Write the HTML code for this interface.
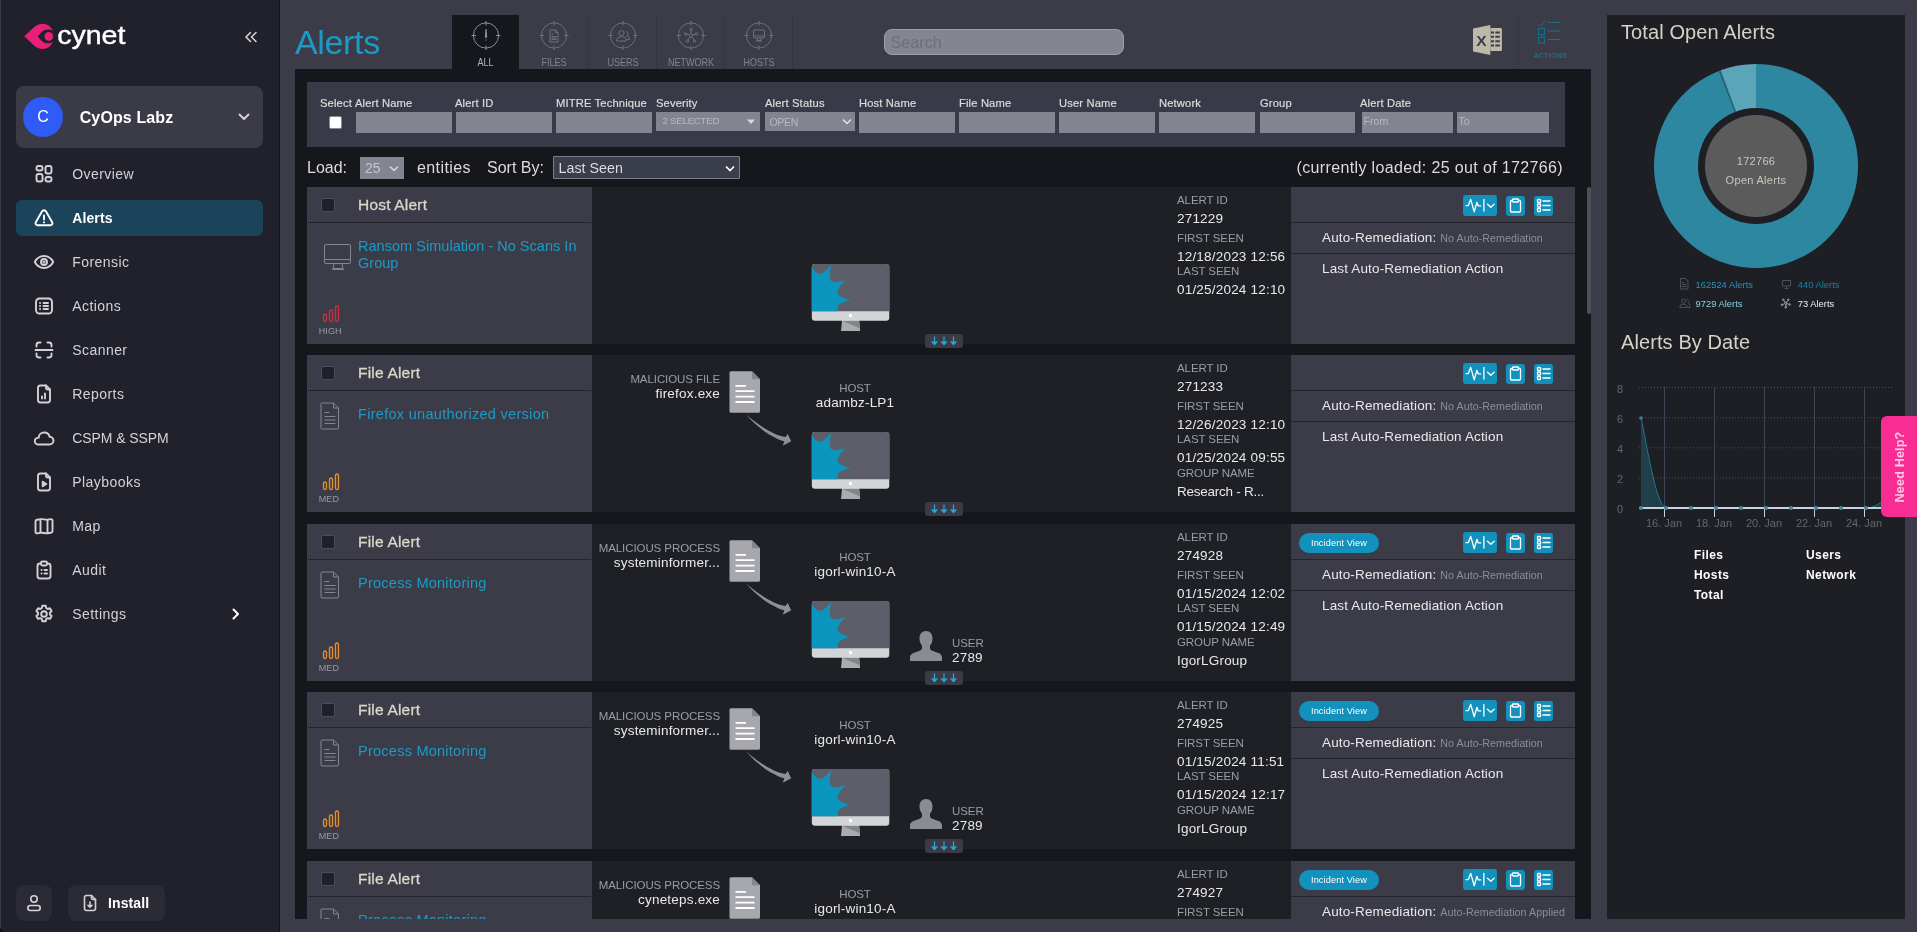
<!DOCTYPE html>
<html lang="en"><head><meta charset="utf-8"><title>Cynet - Alerts</title>
<style>
*{box-sizing:border-box;margin:0;padding:0}
html,body{width:1917px;height:932px;overflow:hidden;background:#3c3c48;font-family:"Liberation Sans",sans-serif;color:#e6e6e6}
.abs{position:absolute}
#app{position:absolute;left:0;top:0;width:1917px;height:932px;overflow:hidden;will-change:transform}
#side{position:absolute;left:0;top:0;width:280px;height:932px;background:#21212c;box-shadow:inset 1px 0 0 #3c3c48,inset -1px 0 0 #15151b;font-family:"Liberation Sans",sans-serif}
#ws{position:absolute;left:16px;top:86px;width:247px;height:62px;background:#3b3b47;border-radius:8px}
#ws .av{position:absolute;left:7px;top:11px;width:40px;height:40px;border-radius:50%;background:#2f5bf7;color:#fff;font-size:16px;text-align:center;line-height:40px}
#ws .nm{position:absolute;left:63.7px;top:22px;font-size:16px;font-weight:bold;color:#fff;line-height:20px;letter-spacing:.12px}
.nav{position:absolute;left:16px;width:247px;height:36px;border-radius:6px;color:#d2d2d6;font-size:14px;line-height:36px;letter-spacing:.45px}
.nav span{position:absolute;left:56.2px;top:0}
.nav svg{position:absolute;left:17px;top:7px;width:22px;height:22px;fill:none;stroke:#d2d2d6;stroke-width:1.9;stroke-linecap:round;stroke-linejoin:round}
.nav.on{background:#1b445a;color:#fff;font-weight:bold;letter-spacing:.12px}
.nav.on svg{stroke:#fff}
.sbtn{position:absolute;top:885px;height:36px;background:#2b2b36;border-radius:8px}
#main{position:absolute;left:295px;top:69px;width:1296px;height:850px;background:#16171c;overflow:hidden}
#title{position:absolute;left:295px;top:20px;font-size:34px;color:#1a9bc7;line-height:44px;letter-spacing:-.35px}
.tab{position:absolute;top:15px;width:68px;height:54px}
.tsep{position:absolute;top:15px;width:1px;height:54px;background:#343741}
.tab.on{background:#16171c;width:67px}
.tab svg{position:absolute;left:19.4px;top:5px;width:30px;height:32px;fill:none;stroke:#6c707a;stroke-width:1}
.tab b{position:absolute;left:0;width:100%;top:42px;text-align:center;font-weight:normal;font-size:10.4px;line-height:12px;color:#80838c;letter-spacing:0;transform:scaleX(.87)}
.tab.on b{color:#b4b4b6}
.tab.on svg{stroke:#8a8e98}
#search{position:absolute;left:884px;top:29px;width:240px;height:26px;border-radius:8px;background:#838690;border:1px solid #9c9fa8;color:#6d7078;font-size:16.2px;line-height:25px;padding-left:5.5px}
#fbar{position:absolute;left:12px;top:13px;width:1258px;height:65px;background:#383b47}
.fl{position:absolute;top:14px;font-size:11.2px;line-height:14px;color:#dcdcdc;white-space:nowrap;letter-spacing:.15px;-webkit-text-stroke:.2px #dcdcdc}
.fi{position:absolute;top:30px;height:21px;background:#828590}
.fi i{position:absolute;left:3px;top:2px;font-style:normal;font-size:10.5px;line-height:14px;color:#b7b9c0;letter-spacing:.1px}
#lbar{position:absolute;left:12px;top:87px;font-size:16px;line-height:24px;color:#dcdcdc;white-space:nowrap}
.card{position:absolute;left:12px;width:1268px;height:157px}
.cl{position:absolute;left:0;top:0;width:285px;height:157px;background:#3c3c48}
.cm{position:absolute;left:285px;top:0;width:699px;height:157px;background:#1e2026}
.cr{position:absolute;left:984px;top:0;width:284px;height:157px;background:#3c3c48}
.cb{position:absolute;left:14px;top:11px;width:14px;height:14px;border:1px solid #4a505b;border-radius:2px;background:#1d2128}
.ct{position:absolute;left:51px;top:7px;font-size:15.5px;line-height:22px;color:#dbd8ca;white-space:nowrap;-webkit-text-stroke:.3px #dbd8ca;letter-spacing:.2px}
.hr{position:absolute;left:1px;right:1px;height:1px;background:#24252c}
.lnk{position:absolute;left:51px;top:51px;width:232px;font-size:14.5px;line-height:17px;color:#1a9bc7;letter-spacing:.1px}
.sev{position:absolute;left:11.7px;top:137.5px;font-size:9px;line-height:12px;color:#9a9ca4;letter-spacing:.1px}
.lab{font-size:11.5px;line-height:15px;color:#9b9da3;white-space:nowrap;letter-spacing:-.08px}
.val{font-size:13.5px;line-height:17px;color:#e9e9e9;white-space:nowrap;letter-spacing:.2px}
.meta{position:absolute;left:585px;top:6px}
.ar{position:absolute;left:31px;font-size:13.5px;line-height:18px;color:#e9e9e9;white-space:nowrap;letter-spacing:.15px}
.ar small{font-size:10.7px;color:#8c8e96;letter-spacing:.05px}
.ib{position:absolute;top:9px;height:19.5px;background:#1391bd;border-radius:3px}
.ib svg{position:absolute;left:0;top:0;fill:none;stroke:#fff;stroke-width:1.3;stroke-linecap:round;stroke-linejoin:round}
.inc{position:absolute;left:8px;top:8.5px;width:80px;height:20px;border-radius:10px;background:#1391bd;color:#fff;font-size:9.2px;line-height:20px;text-align:center;letter-spacing:.12px}
.more{position:absolute;left:617px;top:334px;width:40px;height:14px;background:#3a3b47;border-radius:2px}
#right{position:absolute;left:1607px;top:15px;width:298px;height:904px;background:#1d1f25;overflow:hidden}
.rt{position:absolute;left:14px;font-size:20px;line-height:26px;color:#d5d2c6;white-space:nowrap;letter-spacing:.1px}
.lg{position:absolute;font-size:9.3px;line-height:12px;white-space:nowrap;letter-spacing:.05px}
.cx{position:absolute;font-size:11px;line-height:14px;color:#64676e;white-space:nowrap}
.cl2{position:absolute;font-size:12px;font-weight:bold;line-height:16px;color:#fff;white-space:nowrap;letter-spacing:.42px}
#help{position:absolute;left:1881px;top:416px;width:36px;height:101px;background:#f72d93;border-radius:6px 0 0 6px}
#help span{position:absolute;left:-30.600px;top:43px;width:100px;text-align:center;transform:rotate(-90deg);font-size:12.700px;font-weight:bold;color:#ffc9e3;line-height:16px;letter-spacing:.1px}
</style></head><body><div id="app">
<div id="side">
<svg class="abs" style="left:22px;top:20px" width="110" height="34" viewBox="0 0 110 34"><path d="M2.300 16.300 L12 7.200 C15.500 3.900 20.500 2.900 24.500 4.500 C27.500 5.700 29.800 8 30.800 10.800 C29.500 10 28 9.500 26.500 9.500 C23 9.500 20.500 11 18.800 12.900 L15.800 16.400 L18.800 19.900 C20.500 21.800 23 23.300 26.500 23.300 C28 23.300 29.500 22.800 30.800 21.900 C29.800 24.700 27.500 27 24.500 28.200 C20.500 29.800 15.500 28.800 12 25.500 Z" fill="#e91e79"/><circle cx="26.800" cy="16.400" r="4.300" fill="#e91e79"/><text x="35.200" y="23.800" font-family="Liberation Sans, sans-serif" font-size="25.500" fill="#fff" textLength="68.2" lengthAdjust="spacingAndGlyphs" stroke="#fff" stroke-width=".4">cynet</text></svg>
<svg class="abs" style="left:242px;top:29px" width="16" height="16" viewBox="0 0 16 16" fill="none" stroke="#d8d8dc" stroke-width="1.500" stroke-linecap="round" stroke-linejoin="round"><path d="M8.500 3.500 L4 8 L8.500 12.500 M14 3.500 L9.500 8 L14 12.500"/></svg>
<div id="ws"><div class="av">C</div><div class="nm">CyOps Labz</div><svg class="abs" style="left:220px;top:24px" width="16" height="14" viewBox="0 0 16 14" fill="none" stroke="#d0d0d4" stroke-width="2" stroke-linecap="round" stroke-linejoin="round"><path d="M3.500 4.500 L8 9 L12.500 4.500"/></svg></div>
<div class="nav" style="top:156px"><svg viewBox="0 0 22 22"><rect x="3.5" y="3" width="6" height="4.5" rx="2"/><rect x="12.5" y="3" width="6" height="7.5" rx="2"/><rect x="3.5" y="11" width="6" height="7.5" rx="2"/><rect x="12.5" y="14" width="6" height="4.5" rx="2"/></svg><span>Overview</span></div>
<div class="nav on" style="top:200px"><svg viewBox="0 0 22 22"><path d="M11 3.2c.8 0 1.5.4 1.9 1.1l6.3 10.9c.8 1.4-.2 3.1-1.9 3.1H4.700c-1.700 0-2.700-1.700-1.900-3.100L9.100 4.300c.4-.7 1.100-1.100 1.900-1.100z"/><path d="M11 8.500v4"/><path d="M11 15.300v.1"/></svg><span>Alerts</span></div>
<div class="nav" style="top:244px"><svg viewBox="0 0 22 22"><path d="M1.800 11C3.800 7.200 7.100 5 11 5s7.200 2.200 9.200 6c-2 3.800-5.300 6-9.200 6S3.800 14.800 1.800 11z"/><circle cx="11" cy="11" r="3"/><circle cx="11" cy="11" r=".6"/></svg><span>Forensic</span></div>
<div class="nav" style="top:288px"><svg viewBox="0 0 22 22"><rect x="3" y="3.500" width="16" height="15" rx="3.500"/><path d="M7 8h.1M7 11h.1M7 14h.1M10.500 8h4.500M10.500 11h4.500M10.500 14h4.500"/></svg><span>Actions</span></div>
<div class="nav" style="top:332px"><svg viewBox="0 0 22 22"><path d="M3.500 7.500V6c0-1.400 1.100-2.500 2.500-2.500h1.500M14.500 3.500H16c1.400 0 2.500 1.100 2.500 2.500v1.500M18.500 14.500V16c0 1.400-1.100 2.500-2.500 2.500h-1.500M7.500 18.500H6c-1.400 0-2.500-1.100-2.500-2.500v-1.500M2.500 11h17"/></svg><span>Scanner</span></div>
<div class="nav" style="top:376px"><svg viewBox="0 0 22 22"><path d="M13 2.500H7.500C6.100 2.500 5 3.600 5 5v12c0 1.400 1.100 2.500 2.500 2.500h7c1.400 0 2.500-1.100 2.500-2.500V6.500l-4-4z"/><path d="M13 2.500V5c0 .800.700 1.500 1.500 1.500H17"/><path d="M9 15.500v-2M12 15.500v-5"/></svg><span>Reports</span></div>
<div class="nav" style="top:420px"><svg viewBox="0 0 22 22"><path d="M6.500 17.500h9.800c2.300 0 4.200-1.700 4.200-3.900 0-2.100-1.700-3.800-3.900-3.900C16 7.300 13.800 5.500 11.200 5.500c-3 0-5.400 2.300-5.500 5.100-2.200.200-3.900 1.700-3.900 3.600 0 1.900 1.700 3.300 3.700 3.300z"/></svg><span style="letter-spacing:-.07px">CSPM &amp; SSPM</span></div>
<div class="nav" style="top:464px"><svg viewBox="0 0 22 22"><path d="M13 2.500H7.500C6.100 2.500 5 3.600 5 5v12c0 1.400 1.100 2.500 2.500 2.500h7c1.400 0 2.500-1.100 2.500-2.500V6.500l-4-4z"/><path d="M13 2.500V5c0 .800.700 1.500 1.500 1.500H17"/><path d="M9.700 10.800l3.600 2.200-3.600 2.200z" fill="#d2d2d6"/></svg><span>Playbooks</span></div>
<div class="nav" style="top:508px"><svg viewBox="0 0 22 22"><path d="M2.500 6.500c0-.9.600-1.600 1.500-1.700l3.500-.6v13.600l-3.300.6c-.9.100-1.700-.5-1.700-1.400V6.500zM7.500 4.200c2.300-.5 4.700.9 7 .5v13.600c-2.300.4-4.700-1-7-.5zM14.500 4.700l3.300-.6c.9-.1 1.700.5 1.700 1.400v10.500c0 .9-.6 1.600-1.500 1.700l-3.500.6"/></svg><span>Map</span></div>
<div class="nav" style="top:552px"><svg viewBox="0 0 22 22"><path d="M8 4.500H7C5.600 4.500 4.500 5.600 4.500 7v10c0 1.400 1.100 2.500 2.500 2.500h8c1.400 0 2.500-1.100 2.500-2.500V7c0-1.400-1.100-2.500-2.500-2.500h-1"/><rect x="8" y="2.500" width="6" height="4" rx="1.500"/><path d="M8.500 11h.1M8.500 14.500h.1M11.500 11h2.500M11.500 14.500h2.500"/></svg><span>Audit</span></div>
<div class="nav" style="top:596px"><svg viewBox="0 0 22 22"><circle cx="11" cy="11" r="2.800"/><path d="M9.300 2.800h3.400l.5 2.300 1.500.9 2.200-.8 1.700 2.900-1.700 1.600v1.700l1.700 1.600-1.700 2.900-2.200-.8-1.500.9-.5 2.300H9.300l-.5-2.300-1.500-.9-2.200.8-1.700-2.900 1.700-1.600V9.700L3.400 8.100l1.700-2.900 2.200.8 1.500-.9z"/></svg><span>Settings</span><svg style="left:212px;top:10px;width:16px;height:16px;stroke:#fff;stroke-width:2" viewBox="0 0 16 16"><path d="M5.500 3.500 L10 8 L5.500 12.500"/></svg></div>
<div class="sbtn" style="left:16px;width:36px"><svg class="abs" style="left:8px;top:8px" width="20" height="20" viewBox="0 0 20 20" fill="none" stroke="#d2d2d6" stroke-width="1.600"><circle cx="10" cy="6" r="3.200"/><rect x="3.800" y="12.500" width="12.400" height="5" rx="2.500"/></svg></div>
<div class="sbtn" style="left:68px;width:97px"><svg class="abs" style="left:12px;top:8px" width="20" height="20" viewBox="0 0 20 20" fill="none" stroke="#d2d2d6" stroke-width="1.600" stroke-linecap="round" stroke-linejoin="round"><path d="M11.500 2.500H6.500C5.400 2.500 4.500 3.400 4.500 4.500v11c0 1.100.9 2 2 2h7c1.100 0 2-.9 2-2V6.500l-4-4z"/><path d="M11.500 2.500V5c0 .800.700 1.500 1.500 1.500h2.500"/><path d="M10 9v5M8 12.200l2 2 2-2"/></svg><span class="abs" style="left:40px;top:9px;font-size:14px;font-weight:bold;color:#fff;line-height:18px;letter-spacing:.1px">Install</span></div>
<svg class="abs" style="left:0;top:926px" width="6" height="6" viewBox="0 0 6 6"><path d="M0 0 C0 3.500 2.500 6 6 6 L0 6 Z" fill="#0a0a08"/></svg>
</div>
<div id="title">Alerts</div>
<div class="tab on" style="left:452px"><svg viewBox="0 0 30 32"><circle cx="15" cy="15.500" r="12.600"/><path d="M15 1v4.500M15 25.500v4.500M.5 15.500h4.500M25 15.500h4.500"/><path d="M15 9l-.5 8h1z M15 19.500v1" stroke-width="1.300"/></svg><b>ALL</b></div>
<div class="tab" style="left:520px"><svg viewBox="0 0 30 32"><circle cx="15" cy="15.500" r="12.600"/><path d="M15 1v4.500M15 25.500v4.500M.5 15.500h4.500M25 15.500h4.500"/><path d="M11 10h5.500l2.500 2.500v9.500h-8z M16.500 10v2.500h2.500" stroke-width="1"/><path d="M12.500 14h2M12.500 16.500h5M12.500 18h5M12.500 19.500h5" stroke-width="1.200"/></svg><b>FILES</b></div>
<div class="tsep" style="left:587px"></div>
<div class="tab" style="left:588.5px"><svg viewBox="0 0 30 32"><circle cx="15" cy="15.500" r="12.600"/><path d="M15 1v4.500M15 25.500v4.500M.5 15.500h4.500M25 15.500h4.500"/><circle cx="13.500" cy="13" r="2.600"/><path d="M8.500 21c0-3 2-4.300 5-4.300s5 1.300 5 4.300z"/><path d="M17.500 11.500c1.800 0 2.500 1.200 2.500 2.400 0 1-.5 1.800-1.200 2.200 1.800.4 2.900 1.500 2.900 3.400h-2.500"/></svg><b>USERS</b></div>
<div class="tsep" style="left:656px"></div>
<div class="tab" style="left:656.5px"><svg viewBox="0 0 30 32"><circle cx="15" cy="15.500" r="12.600"/><path d="M15 1v4.500M15 25.500v4.500M.5 15.500h4.500M25 15.500h4.500"/><circle cx="15" cy="15.500" r="1.600"/><circle cx="15" cy="9.500" r="1.200"/><circle cx="9.500" cy="14" r="1.200"/><circle cx="20.500" cy="14" r="1.200"/><circle cx="11.500" cy="21" r="1.200"/><circle cx="18.500" cy="21" r="1.200"/><path d="M15 10.700v3.200M10.700 14.300l2.800.8M19.300 14.300l-2.800.8M12.200 20l1.900-3.100M17.800 20l-1.900-3.100"/></svg><b>NETWORK</b></div>
<div class="tsep" style="left:724px"></div>
<div class="tab" style="left:724.5px"><svg viewBox="0 0 30 32"><circle cx="15" cy="15.500" r="12.600"/><path d="M15 1v4.500M15 25.500v4.500M.5 15.500h4.500M25 15.500h4.500"/><rect x="9.500" y="10" width="11" height="8" rx="1"/><path d="M9.500 16h11M13.500 18l-.5 2.500h4l-.5-2.500M12 21h6"/></svg><b>HOSTS</b></div>
<div class="tsep" style="left:792px"></div>
<div id="search">Search</div>
<svg class="abs" style="left:1472px;top:24px" width="32" height="32" viewBox="0 0 32 32"><path d="M1 4.500 L18.300 1 V31 L1 27.500 Z" fill="#bcb9a9"/><rect x="18.300" y="4" width="11.600" height="23" rx="1" fill="#bcb9a9"/><g stroke="#3c3c48" stroke-width="2"><path d="M19 8.500h3M23.300 8.500h4.500M19 12.800h3M23.300 12.800h4.500M19 17.200h3M23.300 17.200h4.500M19 21.600h3M23.300 21.600h4.500"/></g><text x="4.300" y="21.500" font-family="Liberation Sans, sans-serif" font-weight="bold" font-size="15.500" fill="#3c3c48">X</text></svg>
<div class="abs" style="left:1518px;top:20px;width:1px;height:45px;background:#343440"></div><div class="abs" style="left:1519px;top:15px;width:62px;height:54px"><svg class="abs" style="left:17px;top:3px" width="28" height="28" viewBox="0 0 28 28" fill="none" stroke="#17708e" stroke-width="1"><path d="M2.700 6.200l2 2L9.600 2.300M11.500 4.400h13.200M11.500 13h13.200M11.500 21.500h13.200"/><rect x="2.500" y="10.500" width="6" height="6"/><rect x="2.500" y="19" width="6" height="6"/></svg><span class="abs" style="left:0;width:62px;top:36px;text-align:center;font-size:7.3px;font-weight:bold;line-height:10px;color:#17708e;letter-spacing:.1px">ACTIONS</span></div>
<div id="main">
<div id="fbar">
<div class="fl" style="left:13px">Select</div><div class="fl" style="left:48px">Alert Name</div><div class="fl" style="left:148px">Alert ID</div><div class="fl" style="left:249px">MITRE Technique</div><div class="fl" style="left:349px">Severity</div><div class="fl" style="left:458px">Alert Status</div><div class="fl" style="left:552px">Host Name</div><div class="fl" style="left:652px">File Name</div><div class="fl" style="left:752px">User Name</div><div class="fl" style="left:852px">Network</div><div class="fl" style="left:953px">Group</div><div class="fl" style="left:1053px">Alert Date</div>
<div class="abs" style="left:22px;top:34px;width:13px;height:13px;background:#fff;border:1px solid #8a8a8a;border-radius:2px"></div>
<div class="fi" style="left:49px;width:96px"></div><div class="fi" style="left:149px;width:96px"></div><div class="fi" style="left:249px;width:96px"></div><div class="fi" style="left:552px;width:96px"></div><div class="fi" style="left:652px;width:96px"></div><div class="fi" style="left:752px;width:96px"></div><div class="fi" style="left:852px;width:96px"></div><div class="fi" style="left:953px;width:95px"></div>
<div class="fi" style="left:349px;width:104px;top:30px;height:19px"><i style="left:6.5px;top:2px;font-size:9.7px;letter-spacing:-.25px">2 SELECTED</i><svg class="abs" style="left:89.5px;top:7px" width="10" height="6" viewBox="0 0 10 6"><path d="M1 .5h8L5 5z" fill="#d6d8de"/></svg></div>
<div class="fi" style="left:458px;width:90px;top:30px;height:19px"><i style="left:4.5px;top:2.5px;font-size:10.5px;letter-spacing:-.3px">OPEN</i><svg class="abs" style="left:77px;top:6px" width="10" height="8" viewBox="0 0 10 8" fill="none" stroke="#e6e6ea" stroke-width="1.500"><path d="M1 1.500l4 4 4-4"/></svg></div>
<div class="fi" style="left:1055px;width:91px;top:30px;height:21px"><i style="left:1.5px">From</i></div><div class="fi" style="left:1150px;width:92px;top:30px;height:21px"><i style="left:1.5px">To</i></div>
</div>
<div id="lbar"><span>Load:</span><span class="abs" style="left:53px;top:1px;width:44px;height:22px;background:#828590;color:#c4c6cc;font-size:14px;line-height:22px;padding-left:5px">25<svg class="abs" style="left:29px;top:8px" width="10" height="8" viewBox="0 0 10 8" fill="none" stroke="#d6d8de" stroke-width="1.500"><path d="M1 1.500l4 4 4-4"/></svg></span><span class="abs" style="left:110px;top:0;letter-spacing:.4px">entities</span><span class="abs" style="left:180px;top:0">Sort By:</span><span class="abs" style="left:246px;top:0;width:187px;height:23px;background:#3a3d4a;border:1px solid #7c7f89;border-radius:1px;color:#dcdcdc;font-size:14.3px;line-height:22px;padding-left:4.5px">Last Seen<svg class="abs" style="left:171px;top:7.500px" width="10" height="8" viewBox="0 0 10 8" fill="none" stroke="#fff" stroke-width="1.700"><path d="M1 1.500l4 4 4-4"/></svg></span></div>
<div class="abs" style="right:28px;top:87px;font-size:16px;line-height:24px;color:#dcdcdc;white-space:nowrap;letter-spacing:.36px">(currently loaded: 25 out of 172766)</div>
<div class="card" style="top:118px">
<div class="cl"><div class="cb"></div><div class="ct">Host Alert</div><div class="hr" style="top:35px"></div><svg class="abs" style="left:15px;top:55px" width="32" height="30" viewBox="0 0 32 30" fill="none" stroke="#83868e" stroke-width="1"><rect x="2.500" y="2.500" width="26" height="19" rx="1.500"/><path d="M2.500 17.500h26M12 21.500l-1 5h10l-1-5M10 27.500h12"/></svg><div class="lnk" style="letter-spacing:0.03px">Ransom Simulation - No Scans In Group</div><svg class="abs" style="left:14.5px;top:117px" width="20" height="20" viewBox="0 0 20 20" fill="none" stroke="#c9333f" stroke-width="1.300"><rect x="1.500" y="10" width="3" height="7.500" rx="1.500"/><rect x="7.500" y="6" width="3" height="11.500" rx="1.500"/><rect x="13.500" y="2" width="3" height="15.500" rx="1.500"/></svg><div class="sev">HIGH</div></div>
<div class="cm"><svg class="abs" style="left:218px;top:76px" width="82" height="70" viewBox="0 0 82 70"><path d="M32.100 57h17.100l.900 11H31z" fill="#a9abaf"/><path d="M32.100 57.700h17.100l.600 7.500z" fill="#83858b"/><rect x="1.850" y="1" width="77.400" height="56.700" rx="3" fill="#d3d4d6"/><path d="M4.850 1h71.400a3 3 0 0 1 3 3v44.200H1.850V4a3 3 0 0 1 3-3z" fill="#5c5f69"/><path d="M1.850 3.200C3.500 6 4.500 8 6.500 9.600 9 11 12 10.500 14 8.800 17 6.200 19.500 4 21.800 1.900 20.500 5.500 19.600 8.500 19.600 12 19.400 16 21 18.600 25 18.800 29 19 32.500 18 35.900 16.300 33 19 31 21 29.300 24 27 27.500 27 30 29.500 32 32.500 34.300 36.500 35.800 40.600 36.800 37 37.300 33.500 38.300 30.500 40 27.500 42 27 44.500 27.800 47.800L1.850 47.800Z" fill="#0b96c0" transform="translate(0 .4)"/><rect x="39" y="51" width="3" height="3.200" fill="#fff"/></svg><div class="abs lab" style="left:585px;top:6px">ALERT ID</div><div class="abs val" style="left:585px;top:23px">271229</div><div class="abs lab" style="left:585px;top:44px">FIRST SEEN</div><div class="abs val" style="left:585px;top:61px">12/18/2023 12:56</div><div class="abs lab" style="left:585px;top:77px">LAST SEEN</div><div class="abs val" style="left:585px;top:94px">01/25/2024 12:10</div></div>
<div class="cr"><div class="ib" style="left:172px;width:34px;top:8.3px;height:20.7px"><svg width="34" height="20.7" viewBox="0 0 34 20.7"><path d="M2.900 10.600h2.400L7.700 4.400 11.200 16.800 13.900 7.300 15.300 10.900h2.400M20.900 4.400v11.700M24.500 9.300l3.300 3 3.300-3"/></svg></div><div class="ib" style="left:215px;width:19px"><svg width="19" height="19" viewBox="0 0 19 19"><path d="M6.500 4.500H5.500a1 1 0 0 0-1 1v9.500a1 1 0 0 0 1 1h8a1 1 0 0 0 1-1V5.500a1 1 0 0 0-1-1h-1"/><rect x="6.500" y="3" width="6" height="3" rx=".8"/></svg></div><div class="ib" style="left:243px;width:19px"><svg width="19" height="19" viewBox="0 0 19 19"><rect x="3.500" y="3.500" width="3" height="3" rx=".6"/><rect x="3.500" y="8" width="3" height="3" rx=".6"/><rect x="3.500" y="12.500" width="3" height="3" rx=".6"/><path d="M9 5h7M9 9.500h7M9 14h7" stroke-width="1.500"/></svg></div><div class="hr" style="top:35px;left:0;right:0"></div><div class="ar" style="top:42px">Auto-Remediation: <small>No Auto-Remediation</small></div><div class="hr" style="top:66px;left:0;right:0"></div><div class="ar" style="top:73px">Last Auto-Remediation Action</div></div>
<div class="abs" style="left:618px;top:147px;width:38px;height:14px;background:#3a3b47;border-radius:3px"><svg class="abs" style="left:5px;top:2px" width="28" height="10" viewBox="0 0 28 10" fill="#27a9d6" stroke="#27a9d6" stroke-width="1.200"><path d="M4.500 .5v6M14 .5v6M23.500 .5v6" fill="none"/><path d="M.800 5.600h7.400L4.500 9.500zM10.300 5.600h7.400L14 9.500zM19.800 5.600h7.400L23.500 9.500z" stroke="none"/></svg></div></div>
<div class="card" style="top:286px">
<div class="cl"><div class="cb"></div><div class="ct">File Alert</div><div class="hr" style="top:35px"></div><svg class="abs" style="left:12px;top:47px" width="22" height="30" viewBox="0 0 22 30" fill="none" stroke="#83868e" stroke-width="1"><path d="M2 2a1 1 0 0 1 1-1h11.500l5 5v20a1 1 0 0 1-1 1H3a1 1 0 0 1-1-1z M14.500 1v5h5"/><path d="M5.500 10.500h5M5.500 14.500h11M5.500 18h11M5.500 21.500h11"/></svg><div class="lnk" style="letter-spacing:0.3px">Firefox unauthorized version</div><svg class="abs" style="left:14.5px;top:117px" width="20" height="20" viewBox="0 0 20 20" fill="none" stroke="#e98f2c" stroke-width="1.300"><rect x="1.500" y="10" width="3" height="7.500" rx="1.500"/><rect x="7.500" y="6" width="3" height="11.500" rx="1.500"/><rect x="13.500" y="2" width="3" height="15.500" rx="1.500"/></svg><div class="sev">MED</div></div>
<div class="cm"><div class="abs lab" style="right:571px;top:17px">MALICIOUS FILE</div><div class="abs val" style="right:571px;top:30px">firefox.exe</div><svg class="abs" style="left:136px;top:15px" width="33" height="44" viewBox="0 0 33 44"><path d="M3 1.200h21l8 8v32a1.500 1.500 0 0 1-1.500 1.500H3a1.500 1.500 0 0 1-1.500-1.500V2.700A1.500 1.500 0 0 1 3 1.200z" fill="#a6a8ae"/><path d="M24 1.200l8 8h-8z" fill="#84868d"/><path d="M7.500 15.800h10.500M7.500 21.200h19M7.500 26.600h19M7.500 32h19" stroke="#fff" stroke-width="1.800"/></svg><svg class="abs" style="left:152px;top:57px" width="50" height="36" viewBox="0 0 50 36"><path d="M2.100 2.300C8 8 18 15.500 30 21.500 34 23.300 38 24.500 41.700 25L43.600 21.800 47.200 29.300 38.800 33.700 40.300 29.300C36 28.500 33 26.500 30 25 20 20 9 11 2.100 2.300Z" fill="#8e9097"/></svg><div class="abs lab" style="left:163px;width:200px;text-align:center;top:26px">HOST</div><div class="abs val" style="left:163px;width:200px;text-align:center;top:39px">adambz-LP1</div><svg class="abs" style="left:218px;top:76px" width="82" height="70" viewBox="0 0 82 70"><path d="M32.100 57h17.100l.900 11H31z" fill="#a9abaf"/><path d="M32.100 57.700h17.100l.600 7.500z" fill="#83858b"/><rect x="1.850" y="1" width="77.400" height="56.700" rx="3" fill="#d3d4d6"/><path d="M4.850 1h71.400a3 3 0 0 1 3 3v44.200H1.850V4a3 3 0 0 1 3-3z" fill="#5c5f69"/><path d="M1.850 3.200C3.500 6 4.500 8 6.500 9.600 9 11 12 10.500 14 8.800 17 6.200 19.500 4 21.800 1.900 20.500 5.500 19.600 8.500 19.600 12 19.400 16 21 18.600 25 18.800 29 19 32.500 18 35.900 16.300 33 19 31 21 29.300 24 27 27.500 27 30 29.500 32 32.500 34.300 36.500 35.800 40.600 36.800 37 37.300 33.500 38.300 30.500 40 27.500 42 27 44.500 27.800 47.800L1.850 47.800Z" fill="#0b96c0" transform="translate(0 .4)"/><rect x="39" y="51" width="3" height="3.200" fill="#fff"/></svg><div class="abs lab" style="left:585px;top:6px">ALERT ID</div><div class="abs val" style="left:585px;top:23px">271233</div><div class="abs lab" style="left:585px;top:44px">FIRST SEEN</div><div class="abs val" style="left:585px;top:61px">12/26/2023 12:10</div><div class="abs lab" style="left:585px;top:77px">LAST SEEN</div><div class="abs val" style="left:585px;top:94px">01/25/2024 09:55</div><div class="abs lab" style="left:585px;top:111px">GROUP NAME</div><div class="abs val" style="left:585px;top:128px;letter-spacing:-.25px">Research - R...</div></div>
<div class="cr"><div class="ib" style="left:172px;width:34px;top:8.3px;height:20.7px"><svg width="34" height="20.7" viewBox="0 0 34 20.7"><path d="M2.900 10.600h2.400L7.700 4.400 11.200 16.800 13.900 7.300 15.300 10.900h2.400M20.900 4.400v11.700M24.500 9.300l3.300 3 3.300-3"/></svg></div><div class="ib" style="left:215px;width:19px"><svg width="19" height="19" viewBox="0 0 19 19"><path d="M6.500 4.500H5.500a1 1 0 0 0-1 1v9.500a1 1 0 0 0 1 1h8a1 1 0 0 0 1-1V5.500a1 1 0 0 0-1-1h-1"/><rect x="6.500" y="3" width="6" height="3" rx=".8"/></svg></div><div class="ib" style="left:243px;width:19px"><svg width="19" height="19" viewBox="0 0 19 19"><rect x="3.500" y="3.500" width="3" height="3" rx=".6"/><rect x="3.500" y="8" width="3" height="3" rx=".6"/><rect x="3.500" y="12.500" width="3" height="3" rx=".6"/><path d="M9 5h7M9 9.500h7M9 14h7" stroke-width="1.500"/></svg></div><div class="hr" style="top:35px;left:0;right:0"></div><div class="ar" style="top:42px">Auto-Remediation: <small>No Auto-Remediation</small></div><div class="hr" style="top:66px;left:0;right:0"></div><div class="ar" style="top:73px">Last Auto-Remediation Action</div></div>
<div class="abs" style="left:618px;top:147px;width:38px;height:14px;background:#3a3b47;border-radius:3px"><svg class="abs" style="left:5px;top:2px" width="28" height="10" viewBox="0 0 28 10" fill="#27a9d6" stroke="#27a9d6" stroke-width="1.200"><path d="M4.500 .5v6M14 .5v6M23.500 .5v6" fill="none"/><path d="M.800 5.600h7.400L4.500 9.500zM10.300 5.600h7.400L14 9.500zM19.800 5.600h7.400L23.500 9.500z" stroke="none"/></svg></div></div>
<div class="card" style="top:455px">
<div class="cl"><div class="cb"></div><div class="ct">File Alert</div><div class="hr" style="top:35px"></div><svg class="abs" style="left:12px;top:47px" width="22" height="30" viewBox="0 0 22 30" fill="none" stroke="#83868e" stroke-width="1"><path d="M2 2a1 1 0 0 1 1-1h11.500l5 5v20a1 1 0 0 1-1 1H3a1 1 0 0 1-1-1z M14.500 1v5h5"/><path d="M5.500 10.500h5M5.500 14.500h11M5.500 18h11M5.500 21.500h11"/></svg><div class="lnk" style="letter-spacing:0.25px">Process Monitoring</div><svg class="abs" style="left:14.5px;top:117px" width="20" height="20" viewBox="0 0 20 20" fill="none" stroke="#e98f2c" stroke-width="1.300"><rect x="1.500" y="10" width="3" height="7.500" rx="1.500"/><rect x="7.500" y="6" width="3" height="11.500" rx="1.500"/><rect x="13.500" y="2" width="3" height="15.500" rx="1.500"/></svg><div class="sev">MED</div></div>
<div class="cm"><div class="abs lab" style="right:571px;top:17px">MALICIOUS PROCESS</div><div class="abs val" style="right:571px;top:30px">systeminformer...</div><svg class="abs" style="left:136px;top:15px" width="33" height="44" viewBox="0 0 33 44"><path d="M3 1.200h21l8 8v32a1.500 1.500 0 0 1-1.500 1.500H3a1.500 1.500 0 0 1-1.500-1.500V2.700A1.500 1.500 0 0 1 3 1.200z" fill="#a6a8ae"/><path d="M24 1.200l8 8h-8z" fill="#84868d"/><path d="M7.500 15.800h10.500M7.500 21.200h19M7.500 26.600h19M7.500 32h19" stroke="#fff" stroke-width="1.800"/></svg><svg class="abs" style="left:152px;top:57px" width="50" height="36" viewBox="0 0 50 36"><path d="M2.100 2.300C8 8 18 15.500 30 21.500 34 23.300 38 24.500 41.700 25L43.600 21.800 47.200 29.300 38.800 33.700 40.300 29.300C36 28.500 33 26.500 30 25 20 20 9 11 2.100 2.300Z" fill="#8e9097"/></svg><div class="abs lab" style="left:163px;width:200px;text-align:center;top:26px">HOST</div><div class="abs val" style="left:163px;width:200px;text-align:center;top:39px">igorl-win10-A</div><svg class="abs" style="left:218px;top:76px" width="82" height="70" viewBox="0 0 82 70"><path d="M32.100 57h17.100l.900 11H31z" fill="#a9abaf"/><path d="M32.100 57.700h17.100l.600 7.500z" fill="#83858b"/><rect x="1.850" y="1" width="77.400" height="56.700" rx="3" fill="#d3d4d6"/><path d="M4.850 1h71.400a3 3 0 0 1 3 3v44.200H1.850V4a3 3 0 0 1 3-3z" fill="#5c5f69"/><path d="M1.850 3.200C3.500 6 4.500 8 6.500 9.600 9 11 12 10.500 14 8.800 17 6.200 19.500 4 21.800 1.900 20.500 5.500 19.600 8.500 19.600 12 19.400 16 21 18.600 25 18.800 29 19 32.500 18 35.900 16.300 33 19 31 21 29.300 24 27 27.500 27 30 29.500 32 32.500 34.300 36.500 35.800 40.600 36.800 37 37.300 33.500 38.300 30.500 40 27.500 42 27 44.500 27.800 47.800L1.850 47.800Z" fill="#0b96c0" transform="translate(0 .4)"/><rect x="39" y="51" width="3" height="3.200" fill="#fff"/></svg><svg class="abs" style="left:317px;top:106px" width="34" height="32" viewBox="0 0 34 32"><path d="M17 1c4.200 0 6.500 3 6.500 7.500 0 3-1 5.500-2.500 7v2.500c0 1.500 1 2.300 3 3l5.500 2c2.500 1 3.500 2.500 3.500 5v3H1v-3c0-2.500 1-4 3.500-5l5.500-2c2-.7 3-1.500 3-3V15.500c-1.500-1.500-2.500-4-2.500-7C10.500 4 12.800 1 17 1z" fill="#8a8c92"/></svg><div class="abs lab" style="left:360px;top:112px">USER</div><div class="abs val" style="left:360px;top:125px">2789</div><div class="abs lab" style="left:585px;top:6px">ALERT ID</div><div class="abs val" style="left:585px;top:23px">274928</div><div class="abs lab" style="left:585px;top:44px">FIRST SEEN</div><div class="abs val" style="left:585px;top:61px">01/15/2024 12:02</div><div class="abs lab" style="left:585px;top:77px">LAST SEEN</div><div class="abs val" style="left:585px;top:94px">01/15/2024 12:49</div><div class="abs lab" style="left:585px;top:111px">GROUP NAME</div><div class="abs val" style="left:585px;top:128px">IgorLGroup</div></div>
<div class="cr"><div class="inc">Incident View</div><div class="ib" style="left:172px;width:34px;top:8.3px;height:20.7px"><svg width="34" height="20.7" viewBox="0 0 34 20.7"><path d="M2.900 10.600h2.400L7.700 4.400 11.200 16.800 13.900 7.300 15.300 10.900h2.400M20.900 4.400v11.700M24.500 9.300l3.300 3 3.300-3"/></svg></div><div class="ib" style="left:215px;width:19px"><svg width="19" height="19" viewBox="0 0 19 19"><path d="M6.500 4.500H5.500a1 1 0 0 0-1 1v9.500a1 1 0 0 0 1 1h8a1 1 0 0 0 1-1V5.500a1 1 0 0 0-1-1h-1"/><rect x="6.500" y="3" width="6" height="3" rx=".8"/></svg></div><div class="ib" style="left:243px;width:19px"><svg width="19" height="19" viewBox="0 0 19 19"><rect x="3.500" y="3.500" width="3" height="3" rx=".6"/><rect x="3.500" y="8" width="3" height="3" rx=".6"/><rect x="3.500" y="12.500" width="3" height="3" rx=".6"/><path d="M9 5h7M9 9.500h7M9 14h7" stroke-width="1.500"/></svg></div><div class="hr" style="top:35px;left:0;right:0"></div><div class="ar" style="top:42px">Auto-Remediation: <small>No Auto-Remediation</small></div><div class="hr" style="top:66px;left:0;right:0"></div><div class="ar" style="top:73px">Last Auto-Remediation Action</div></div>
<div class="abs" style="left:618px;top:147px;width:38px;height:14px;background:#3a3b47;border-radius:3px"><svg class="abs" style="left:5px;top:2px" width="28" height="10" viewBox="0 0 28 10" fill="#27a9d6" stroke="#27a9d6" stroke-width="1.200"><path d="M4.500 .5v6M14 .5v6M23.500 .5v6" fill="none"/><path d="M.800 5.600h7.400L4.500 9.500zM10.300 5.600h7.400L14 9.500zM19.800 5.600h7.400L23.500 9.500z" stroke="none"/></svg></div></div>
<div class="card" style="top:623px">
<div class="cl"><div class="cb"></div><div class="ct">File Alert</div><div class="hr" style="top:35px"></div><svg class="abs" style="left:12px;top:47px" width="22" height="30" viewBox="0 0 22 30" fill="none" stroke="#83868e" stroke-width="1"><path d="M2 2a1 1 0 0 1 1-1h11.500l5 5v20a1 1 0 0 1-1 1H3a1 1 0 0 1-1-1z M14.500 1v5h5"/><path d="M5.500 10.500h5M5.500 14.500h11M5.500 18h11M5.500 21.500h11"/></svg><div class="lnk" style="letter-spacing:0.25px">Process Monitoring</div><svg class="abs" style="left:14.5px;top:117px" width="20" height="20" viewBox="0 0 20 20" fill="none" stroke="#e98f2c" stroke-width="1.300"><rect x="1.500" y="10" width="3" height="7.500" rx="1.500"/><rect x="7.500" y="6" width="3" height="11.500" rx="1.500"/><rect x="13.500" y="2" width="3" height="15.500" rx="1.500"/></svg><div class="sev">MED</div></div>
<div class="cm"><div class="abs lab" style="right:571px;top:17px">MALICIOUS PROCESS</div><div class="abs val" style="right:571px;top:30px">systeminformer...</div><svg class="abs" style="left:136px;top:15px" width="33" height="44" viewBox="0 0 33 44"><path d="M3 1.200h21l8 8v32a1.500 1.500 0 0 1-1.500 1.500H3a1.500 1.500 0 0 1-1.500-1.500V2.700A1.500 1.500 0 0 1 3 1.200z" fill="#a6a8ae"/><path d="M24 1.200l8 8h-8z" fill="#84868d"/><path d="M7.500 15.800h10.500M7.500 21.200h19M7.500 26.600h19M7.500 32h19" stroke="#fff" stroke-width="1.800"/></svg><svg class="abs" style="left:152px;top:57px" width="50" height="36" viewBox="0 0 50 36"><path d="M2.100 2.300C8 8 18 15.500 30 21.500 34 23.300 38 24.500 41.700 25L43.600 21.800 47.200 29.300 38.800 33.700 40.300 29.300C36 28.500 33 26.500 30 25 20 20 9 11 2.100 2.300Z" fill="#8e9097"/></svg><div class="abs lab" style="left:163px;width:200px;text-align:center;top:26px">HOST</div><div class="abs val" style="left:163px;width:200px;text-align:center;top:39px">igorl-win10-A</div><svg class="abs" style="left:218px;top:76px" width="82" height="70" viewBox="0 0 82 70"><path d="M32.100 57h17.100l.900 11H31z" fill="#a9abaf"/><path d="M32.100 57.700h17.100l.600 7.500z" fill="#83858b"/><rect x="1.850" y="1" width="77.400" height="56.700" rx="3" fill="#d3d4d6"/><path d="M4.850 1h71.400a3 3 0 0 1 3 3v44.200H1.850V4a3 3 0 0 1 3-3z" fill="#5c5f69"/><path d="M1.850 3.200C3.500 6 4.500 8 6.500 9.600 9 11 12 10.500 14 8.800 17 6.200 19.500 4 21.800 1.900 20.500 5.500 19.600 8.500 19.600 12 19.400 16 21 18.600 25 18.800 29 19 32.500 18 35.900 16.300 33 19 31 21 29.300 24 27 27.500 27 30 29.500 32 32.500 34.300 36.500 35.800 40.600 36.800 37 37.300 33.500 38.300 30.500 40 27.500 42 27 44.500 27.800 47.800L1.850 47.800Z" fill="#0b96c0" transform="translate(0 .4)"/><rect x="39" y="51" width="3" height="3.200" fill="#fff"/></svg><svg class="abs" style="left:317px;top:106px" width="34" height="32" viewBox="0 0 34 32"><path d="M17 1c4.200 0 6.500 3 6.500 7.500 0 3-1 5.500-2.500 7v2.500c0 1.500 1 2.300 3 3l5.500 2c2.500 1 3.500 2.500 3.500 5v3H1v-3c0-2.500 1-4 3.500-5l5.500-2c2-.7 3-1.500 3-3V15.500c-1.500-1.500-2.500-4-2.500-7C10.500 4 12.800 1 17 1z" fill="#8a8c92"/></svg><div class="abs lab" style="left:360px;top:112px">USER</div><div class="abs val" style="left:360px;top:125px">2789</div><div class="abs lab" style="left:585px;top:6px">ALERT ID</div><div class="abs val" style="left:585px;top:23px">274925</div><div class="abs lab" style="left:585px;top:44px">FIRST SEEN</div><div class="abs val" style="left:585px;top:61px">01/15/2024 11:51</div><div class="abs lab" style="left:585px;top:77px">LAST SEEN</div><div class="abs val" style="left:585px;top:94px">01/15/2024 12:17</div><div class="abs lab" style="left:585px;top:111px">GROUP NAME</div><div class="abs val" style="left:585px;top:128px">IgorLGroup</div></div>
<div class="cr"><div class="inc">Incident View</div><div class="ib" style="left:172px;width:34px;top:8.3px;height:20.7px"><svg width="34" height="20.7" viewBox="0 0 34 20.7"><path d="M2.900 10.600h2.400L7.700 4.400 11.200 16.800 13.900 7.300 15.300 10.900h2.400M20.900 4.400v11.700M24.500 9.300l3.300 3 3.300-3"/></svg></div><div class="ib" style="left:215px;width:19px"><svg width="19" height="19" viewBox="0 0 19 19"><path d="M6.500 4.500H5.500a1 1 0 0 0-1 1v9.500a1 1 0 0 0 1 1h8a1 1 0 0 0 1-1V5.500a1 1 0 0 0-1-1h-1"/><rect x="6.500" y="3" width="6" height="3" rx=".8"/></svg></div><div class="ib" style="left:243px;width:19px"><svg width="19" height="19" viewBox="0 0 19 19"><rect x="3.500" y="3.500" width="3" height="3" rx=".6"/><rect x="3.500" y="8" width="3" height="3" rx=".6"/><rect x="3.500" y="12.500" width="3" height="3" rx=".6"/><path d="M9 5h7M9 9.500h7M9 14h7" stroke-width="1.500"/></svg></div><div class="hr" style="top:35px;left:0;right:0"></div><div class="ar" style="top:42px">Auto-Remediation: <small>No Auto-Remediation</small></div><div class="hr" style="top:66px;left:0;right:0"></div><div class="ar" style="top:73px">Last Auto-Remediation Action</div></div>
<div class="abs" style="left:618px;top:147px;width:38px;height:14px;background:#3a3b47;border-radius:3px"><svg class="abs" style="left:5px;top:2px" width="28" height="10" viewBox="0 0 28 10" fill="#27a9d6" stroke="#27a9d6" stroke-width="1.200"><path d="M4.500 .5v6M14 .5v6M23.500 .5v6" fill="none"/><path d="M.800 5.600h7.400L4.500 9.500zM10.300 5.600h7.400L14 9.500zM19.800 5.600h7.400L23.500 9.500z" stroke="none"/></svg></div></div>
<div class="card" style="top:792px">
<div class="cl"><div class="cb"></div><div class="ct">File Alert</div><div class="hr" style="top:35px"></div><svg class="abs" style="left:12px;top:47px" width="22" height="30" viewBox="0 0 22 30" fill="none" stroke="#83868e" stroke-width="1"><path d="M2 2a1 1 0 0 1 1-1h11.500l5 5v20a1 1 0 0 1-1 1H3a1 1 0 0 1-1-1z M14.500 1v5h5"/><path d="M5.500 10.500h5M5.500 14.500h11M5.500 18h11M5.500 21.500h11"/></svg><div class="lnk" style="letter-spacing:0.25px">Process Monitoring</div><svg class="abs" style="left:14.5px;top:117px" width="20" height="20" viewBox="0 0 20 20" fill="none" stroke="#e98f2c" stroke-width="1.300"><rect x="1.500" y="10" width="3" height="7.500" rx="1.500"/><rect x="7.500" y="6" width="3" height="11.500" rx="1.500"/><rect x="13.500" y="2" width="3" height="15.500" rx="1.500"/></svg><div class="sev">MED</div></div>
<div class="cm"><div class="abs lab" style="right:571px;top:17px">MALICIOUS PROCESS</div><div class="abs val" style="right:571px;top:30px">cyneteps.exe</div><svg class="abs" style="left:136px;top:15px" width="33" height="44" viewBox="0 0 33 44"><path d="M3 1.200h21l8 8v32a1.500 1.500 0 0 1-1.500 1.500H3a1.500 1.500 0 0 1-1.500-1.500V2.700A1.500 1.500 0 0 1 3 1.200z" fill="#a6a8ae"/><path d="M24 1.200l8 8h-8z" fill="#84868d"/><path d="M7.500 15.800h10.500M7.500 21.200h19M7.500 26.600h19M7.500 32h19" stroke="#fff" stroke-width="1.800"/></svg><svg class="abs" style="left:152px;top:57px" width="50" height="36" viewBox="0 0 50 36"><path d="M2.100 2.300C8 8 18 15.500 30 21.500 34 23.300 38 24.500 41.700 25L43.600 21.800 47.200 29.300 38.800 33.700 40.300 29.300C36 28.500 33 26.500 30 25 20 20 9 11 2.100 2.300Z" fill="#8e9097"/></svg><div class="abs lab" style="left:163px;width:200px;text-align:center;top:26px">HOST</div><div class="abs val" style="left:163px;width:200px;text-align:center;top:39px">igorl-win10-A</div><svg class="abs" style="left:218px;top:76px" width="82" height="70" viewBox="0 0 82 70"><path d="M32.100 57h17.100l.900 11H31z" fill="#a9abaf"/><path d="M32.100 57.700h17.100l.600 7.500z" fill="#83858b"/><rect x="1.850" y="1" width="77.400" height="56.700" rx="3" fill="#d3d4d6"/><path d="M4.850 1h71.400a3 3 0 0 1 3 3v44.200H1.850V4a3 3 0 0 1 3-3z" fill="#5c5f69"/><path d="M1.850 3.200C3.500 6 4.500 8 6.500 9.600 9 11 12 10.500 14 8.800 17 6.200 19.500 4 21.800 1.900 20.500 5.500 19.600 8.500 19.600 12 19.400 16 21 18.600 25 18.800 29 19 32.500 18 35.900 16.300 33 19 31 21 29.300 24 27 27.500 27 30 29.500 32 32.500 34.300 36.500 35.800 40.600 36.800 37 37.300 33.500 38.300 30.500 40 27.500 42 27 44.500 27.800 47.800L1.850 47.800Z" fill="#0b96c0" transform="translate(0 .4)"/><rect x="39" y="51" width="3" height="3.200" fill="#fff"/></svg><svg class="abs" style="left:317px;top:106px" width="34" height="32" viewBox="0 0 34 32"><path d="M17 1c4.200 0 6.500 3 6.500 7.500 0 3-1 5.500-2.500 7v2.500c0 1.500 1 2.300 3 3l5.500 2c2.500 1 3.500 2.500 3.500 5v3H1v-3c0-2.500 1-4 3.500-5l5.500-2c2-.7 3-1.500 3-3V15.500c-1.500-1.500-2.500-4-2.500-7C10.500 4 12.800 1 17 1z" fill="#8a8c92"/></svg><div class="abs lab" style="left:360px;top:112px">USER</div><div class="abs val" style="left:360px;top:125px">2789</div><div class="abs lab" style="left:585px;top:6px">ALERT ID</div><div class="abs val" style="left:585px;top:23px">274927</div><div class="abs lab" style="left:585px;top:44px">FIRST SEEN</div><div class="abs val" style="left:585px;top:61px">01/15/2024 12:02</div><div class="abs lab" style="left:585px;top:77px">LAST SEEN</div><div class="abs val" style="left:585px;top:94px">01/15/2024 12:49</div><div class="abs lab" style="left:585px;top:111px">GROUP NAME</div><div class="abs val" style="left:585px;top:128px">IgorLGroup</div></div>
<div class="cr"><div class="inc">Incident View</div><div class="ib" style="left:172px;width:34px;top:8.3px;height:20.7px"><svg width="34" height="20.7" viewBox="0 0 34 20.7"><path d="M2.900 10.600h2.400L7.700 4.400 11.200 16.800 13.900 7.300 15.300 10.900h2.400M20.900 4.400v11.700M24.500 9.300l3.300 3 3.300-3"/></svg></div><div class="ib" style="left:215px;width:19px"><svg width="19" height="19" viewBox="0 0 19 19"><path d="M6.500 4.500H5.500a1 1 0 0 0-1 1v9.500a1 1 0 0 0 1 1h8a1 1 0 0 0 1-1V5.500a1 1 0 0 0-1-1h-1"/><rect x="6.500" y="3" width="6" height="3" rx=".8"/></svg></div><div class="ib" style="left:243px;width:19px"><svg width="19" height="19" viewBox="0 0 19 19"><rect x="3.500" y="3.500" width="3" height="3" rx=".6"/><rect x="3.500" y="8" width="3" height="3" rx=".6"/><rect x="3.500" y="12.500" width="3" height="3" rx=".6"/><path d="M9 5h7M9 9.500h7M9 14h7" stroke-width="1.500"/></svg></div><div class="hr" style="top:35px;left:0;right:0"></div><div class="ar" style="top:42px">Auto-Remediation: <small>Auto-Remediation Applied</small></div><div class="hr" style="top:66px;left:0;right:0"></div><div class="ar" style="top:73px">Last Auto-Remediation Action</div></div>
<div class="abs" style="left:618px;top:147px;width:38px;height:14px;background:#3a3b47;border-radius:3px"><svg class="abs" style="left:5px;top:2px" width="28" height="10" viewBox="0 0 28 10" fill="#27a9d6" stroke="#27a9d6" stroke-width="1.200"><path d="M4.500 .5v6M14 .5v6M23.500 .5v6" fill="none"/><path d="M.800 5.600h7.400L4.500 9.500zM10.300 5.600h7.400L14 9.500zM19.800 5.600h7.400L23.500 9.500z" stroke="none"/></svg></div></div>
<div class="abs" style="left:1292px;top:118px;width:4px;height:127px;background:#4e4f5a;border-radius:2px"></div>
</div>
<div id="right">
<div class="rt" style="top:4px">Total Open Alerts</div>
<svg class="abs" style="left:0;top:40px" width="298" height="230" viewBox="0 0 298 230"><path d="M149.00 9.00A102 102 0 1 1 111.95 15.97L130.84 64.42A50 50 0 1 0 149.00 61.00Z" fill="#2e87a0"/><path d="M111.95 15.97A102 102 0 0 1 113.61 15.34L131.65 64.11A50 50 0 0 0 130.84 64.42Z" fill="#1d6f8a"/><path d="M113.61 15.34A102 102 0 0 1 149.00 9.00L149.00 61.00A50 50 0 0 0 131.65 64.11Z" fill="#5ba5b9"/><circle cx="149" cy="111" r="58" fill="#1d1f25"/><circle cx="149" cy="111" r="51" fill="#5b5b5c"/><text x="149" y="110" text-anchor="middle" font-family="Liberation Sans, sans-serif" font-size="11" fill="#c9c6ba" letter-spacing=".3">172766</text><text x="149" y="129" text-anchor="middle" font-family="Liberation Sans, sans-serif" font-size="11" fill="#c9c6ba" letter-spacing=".3">Open Alerts</text></svg>
<div class="lg" style="left:88.500px;top:264px;color:#2a93b8">162524 Alerts</div><div class="lg" style="left:190.700px;top:264px;color:#1c7fa3">440 Alerts</div><div class="lg" style="left:88.500px;top:283px;color:#8ecde0">9729 Alerts</div><div class="lg" style="left:190.700px;top:283px;color:#e6f3f8">73 Alerts</div>
<svg class="abs" style="left:70px;top:262px" width="120" height="34" viewBox="0 0 120 34" fill="none" stroke="#4d5059" stroke-width="1"><path d="M3.500 1.500h5l2.500 2.500v8h-7.500z M5 5.500h2M5 7.500h4.500M5 9.500h4.500"/><path d="M105.500 3.500h8v5.500h-8zM109.500 9v2M107.500 11.500h4"/><circle cx="6.500" cy="24" r="2"/><path d="M2.800 30.500c0-2.300 1.500-3.300 3.700-3.300s3.700 1 3.700 3.300zM9.500 22.500c1.500 0 2.200 1.200 1.700 2.800 1.200.5 1.700 1.700 1.700 5.200h-2.500"/><g stroke="#a4a8b0"><circle cx="108.800" cy="26.300" r="1.100"/><circle cx="106.300" cy="22.800" r=".800"/><circle cx="111.300" cy="22.800" r=".800"/><circle cx="105" cy="27.800" r=".800"/><circle cx="112.600" cy="27.500" r=".800"/><circle cx="108.800" cy="30.200" r=".900"/><path d="M108.200 25.400l-1.400-1.900M109.400 25.400l1.400-1.900M107.700 26.600l-1.900.9M109.900 26.600l1.900.7M108.800 27.400v1.900"/></g></svg>
<div class="rt" style="top:314px">Alerts By Date</div>
<svg class="abs" style="left:0;top:360px" width="298" height="150" viewBox="0 0 298 150"><path d="M32 12.5H287" stroke="#4a4d55" stroke-width="1" stroke-dasharray="1 2"/><path d="M32 42.7H287" stroke="#4a4d55" stroke-width="1" stroke-dasharray="1 2"/><path d="M32 72.8H287" stroke="#4a4d55" stroke-width="1" stroke-dasharray="1 2"/><path d="M32 103H287" stroke="#4a4d55" stroke-width="1" stroke-dasharray="1 2"/><path d="M57.5 12V132" stroke="#3d4654" stroke-width="1"/><path d="M107.5 12V132" stroke="#3d4654" stroke-width="1"/><path d="M157.5 12V132" stroke="#3d4654" stroke-width="1"/><path d="M207.5 12V132" stroke="#3d4654" stroke-width="1"/><path d="M257.5 12V132" stroke="#3d4654" stroke-width="1"/><path d="M34 43 C40 70 48 125 58 133 L34 133 Z" fill="#203f4a"/><path d="M34 43 C40 70 48 125 58 133" stroke="#2b7388" stroke-width="1" fill="none"/><path d="M260 133 C270 132 278 126 287 112 V133 Z" fill="#203f4a"/><path d="M260 133 C270 132 278 126 287 112" stroke="#2b7388" stroke-width="1" fill="none"/><path d="M32 133H287" stroke="#c5d2e0" stroke-width="2"/><path d="M57.5 134V142" stroke="#c5d2e0" stroke-width="1"/><path d="M107.5 134V142" stroke="#c5d2e0" stroke-width="1"/><path d="M157.5 134V142" stroke="#c5d2e0" stroke-width="1"/><path d="M207.5 134V142" stroke="#c5d2e0" stroke-width="1"/><path d="M257.5 134V142" stroke="#c5d2e0" stroke-width="1"/><circle cx="34" cy="133" r="2.100" fill="#4a8a9e"/><circle cx="59" cy="133" r="2.100" fill="#4a8a9e"/><circle cx="84" cy="133" r="2.100" fill="#4a8a9e"/><circle cx="109" cy="133" r="2.100" fill="#4a8a9e"/><circle cx="134" cy="133" r="2.100" fill="#4a8a9e"/><circle cx="159" cy="133" r="2.100" fill="#4a8a9e"/><circle cx="184" cy="133" r="2.100" fill="#4a8a9e"/><circle cx="209" cy="133" r="2.100" fill="#4a8a9e"/><circle cx="234" cy="133" r="2.100" fill="#4a8a9e"/><circle cx="259" cy="133" r="2.100" fill="#4a8a9e"/><circle cx="34" cy="43" r="1.800" fill="#2e87a0"/></svg>
<div class="cx" style="left:10px;top:367px">8</div><div class="cx" style="left:10px;top:397px">6</div><div class="cx" style="left:10px;top:427px">4</div><div class="cx" style="left:10px;top:457px">2</div><div class="cx" style="left:10px;top:487px">0</div><div class="cx" style="left:27px;width:60px;text-align:center;top:501px">16. Jan</div><div class="cx" style="left:77px;width:60px;text-align:center;top:501px">18. Jan</div><div class="cx" style="left:127px;width:60px;text-align:center;top:501px">20. Jan</div><div class="cx" style="left:177px;width:60px;text-align:center;top:501px">22. Jan</div><div class="cx" style="left:227px;width:60px;text-align:center;top:501px">24. Jan</div>
<div class="cl2" style="left:87px;top:532px">Files</div><div class="cl2" style="left:199px;top:532px">Users</div><div class="cl2" style="left:87px;top:552px">Hosts</div><div class="cl2" style="left:199px;top:552px">Network</div><div class="cl2" style="left:87px;top:572px">Total</div>
</div>
<div id="help"><span>Need Help?</span></div>
</div></body></html>
